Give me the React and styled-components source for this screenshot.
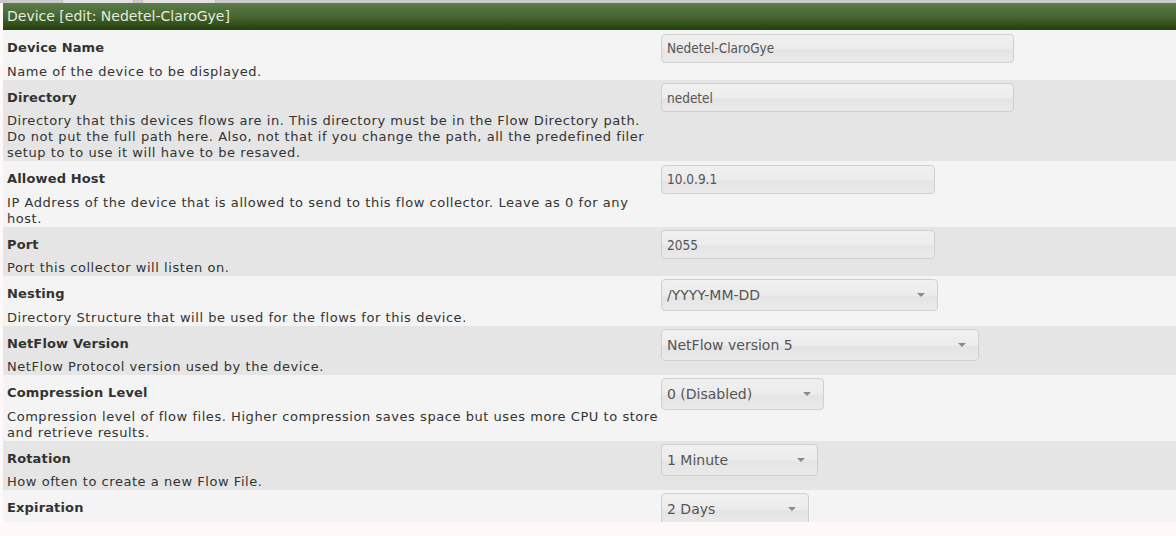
import React from "react";
import styled, { createGlobalStyle } from "styled-components";

const GlobalStyle = createGlobalStyle`
  html, body {
    margin: 0;
    padding: 0;
    background: #fff8f8;
    font-family: "DejaVu Sans", Verdana, sans-serif;
  }
`;

const fields = [
  {
    title: "Device Name",
    desc: "Name of the device to be displayed.",
    kind: "input",
    value: "Nedetel-ClaroGye",
    width: 353,
  },
  {
    title: "Directory",
    desc:
      "Directory that this devices flows are in. This directory must be in the Flow Directory path. Do not put the full path here. Also, not that if you change the path, all the predefined filer setup to to use it will have to be resaved.",
    kind: "input",
    value: "nedetel",
    width: 353,
  },
  {
    title: "Allowed Host",
    desc:
      "IP Address of the device that is allowed to send to this flow collector. Leave as 0 for any host.",
    kind: "input",
    value: "10.0.9.1",
    width: 274,
  },
  {
    title: "Port",
    desc: "Port this collector will listen on.",
    kind: "input",
    value: "2055",
    width: 274,
  },
  {
    title: "Nesting",
    desc: "Directory Structure that will be used for the flows for this device.",
    kind: "select",
    value: "/YYYY-MM-DD",
    width: 277,
  },
  {
    title: "NetFlow Version",
    desc: "NetFlow Protocol version used by the device.",
    kind: "select",
    value: "NetFlow version 5",
    width: 318,
  },
  {
    title: "Compression Level",
    desc:
      "Compression level of flow files. Higher compression saves space but uses more CPU to store and retrieve results.",
    kind: "select",
    value: "0 (Disabled)",
    width: 163,
  },
  {
    title: "Rotation",
    desc: "How often to create a new Flow File.",
    kind: "select",
    value: "1 Minute",
    width: 157,
  },
  {
    title: "Expiration",
    kind: "select",
    value: "2 Days",
    width: 148,
  },
];

function Field({ field }) {
  if (field.kind === "select") {
    return (
      <SelectWrap $width={field.width}>
        <Select defaultValue={field.value}>
          <option>{field.value}</option>
        </Select>
      </SelectWrap>
    );
  }
  return <TextInput $width={field.width} defaultValue={field.value} />;
}

export default function App() {
  return (
    <>
      <GlobalStyle />
      <TabStrip>
        <TabEdge $w={62} />
        <TabEdge $w={70} $light />
        <TabEdge $w={8} />
        <TabEdge $w={72} $light />
        <TabEdge $w={1000} />
      </TabStrip>
      <Panel>
        <PanelHeader>Device [edit: Nedetel-ClaroGye]</PanelHeader>
        {fields.map((field, i) => (
          <Row key={field.title} $dark={i % 2 === 1} $last={!field.desc}>
            <LabelCell>
              <Title>{field.title}</Title>
              {field.desc && <Desc>{field.desc}</Desc>}
            </LabelCell>
            <FieldCell $select={field.kind === "select"}>
              <Field field={field} />
            </FieldCell>
          </Row>
        ))}
      </Panel>
    </>
  );
}

const TabStrip = styled.div`
  display: flex;
  height: 3px;
  overflow: hidden;
  background: #cacaca;
`;

const TabEdge = styled.div`
  flex: none;
  width: ${(p) => p.$w}px;
  background: ${(p) => (p.$light ? "#e2e2e2" : "#cacaca")};
  border-right: 1px solid #bdbdbd;
`;

const Panel = styled.div`
  margin-left: 3px;
  background: #f4f4f4;
`;

const PanelHeader = styled.div`
  height: 27px;
  line-height: 27px;
  padding-left: 4px;
  font-size: 14px;
  color: #e4ecdc;
  background: linear-gradient(#5c7c4b 0%, #46652f 50%, #23400e 100%);
`;

const Row = styled.div`
  display: grid;
  grid-template-columns: 658px 1fr;
  background: ${(p) => (p.$dark ? "#e5e5e5" : "#f4f4f4")};
  height: ${(p) => (p.$last ? "32px" : "auto")};
  overflow: hidden;
`;

const LabelCell = styled.div`
  padding: 8px 0 0 4px;
  color: #333;
`;

const Title = styled.div`
  font-size: 13px;
  font-weight: bold;
  letter-spacing: 0.15px;
  line-height: 19px;
`;

const Desc = styled.div`
  margin-top: 6.5px;
  font-size: 13px;
  letter-spacing: 0.55px;
  line-height: 16px;
`;

const FieldCell = styled.div`
  padding-top: ${(p) => (p.$select ? "3px" : "3.5px")};
`;

const controlSurface = `
  box-sizing: border-box;
  border: 1px solid #cfcfcf;
  border-radius: 4px;
  background: linear-gradient(#f0f0f0 0%, #ececec 50%, #e4e4e4 56%, #eaeaea 100%);
  color: #555;
  outline: none;
  margin: 0;
`;

const TextInput = styled.input`
  ${controlSurface}
  display: block;
  width: ${(p) => p.$width}px;
  height: 29px;
  padding: 0 5px;
  font-family: "DejaVu Sans Condensed", "DejaVu Sans", sans-serif;
  font-size: 13.5px;
`;

const SelectWrap = styled.div`
  position: relative;
  width: ${(p) => p.$width}px;

  &::after {
    content: "";
    position: absolute;
    right: 13px;
    top: 14px;
    border-left: 4px solid transparent;
    border-right: 4px solid transparent;
    border-top: 4px solid #8a8a8a;
    pointer-events: none;
  }
`;

const Select = styled.select`
  ${controlSurface}
  appearance: none;
  -webkit-appearance: none;
  display: block;
  width: 100%;
  height: 32px;
  padding: 0 5px;
  font-family: "DejaVu Sans", Verdana, sans-serif;
  font-size: 14px;
`;
